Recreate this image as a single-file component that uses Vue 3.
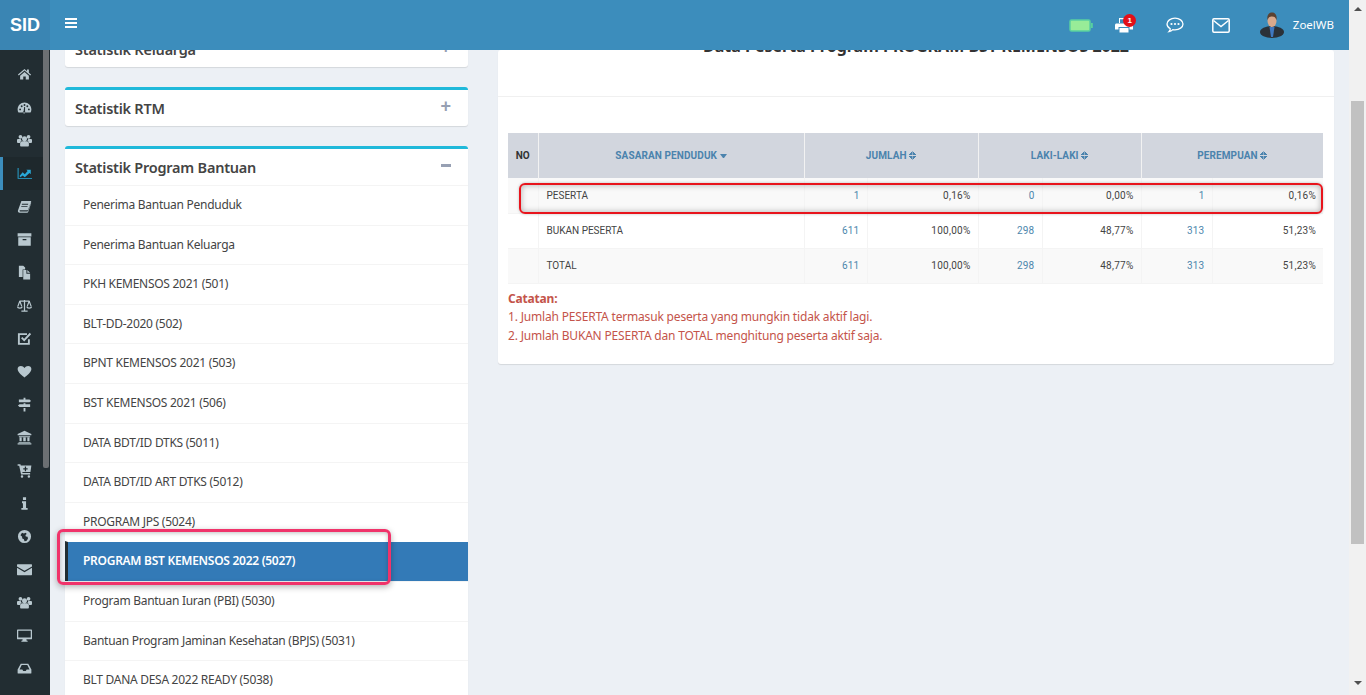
<script setup>
const usersIcon = 'M5.500 3a3 3 0 1 1 0 6 3 3 0 0 1 0-6zm13 0a3 3 0 1 1 0 6 3 3 0 0 1 0-6zM12 5a4 4 0 1 1 0 8 4 4 0 0 1 0-8zM0 11c0-1 1-1.500 2-1.500h4c.2 1 .7 2.200 1.500 3C6 13.200 4.800 14.500 4.700 16H1.500C.6 16 0 15.500 0 14.500zm24 0c0-1-1-1.500-2-1.500h-4c-.2 1-.7 2.200-1.500 3 1.500.7 2.700 2 2.800 3.500h3.200c.9 0 1.500-.5 1.500-1.500zM8.500 13h7c2 0 3.500 1.500 3.500 3.500V20c0 1-.8 1.500-1.500 1.500h-11C5.800 21.500 5 21 5 20v-3.500C5 14.500 6.500 13 8.500 13z'
const sideIcons = [
  { d: 'M12 3 1.500 12l1.300 1.500L12 5.600l9.200 7.900 1.300-1.500-3.500-3V4h-3v2.900zM5 13.800 12 8l7 5.800V20h-5v-5h-4v5H5z' },
  { d: 'M12 4C5.900 4 1 8.900 1 15c0 1.900.5 3.700 1.400 5h19.200c.9-1.300 1.400-3.100 1.400-5 0-6.100-4.900-11-11-11zM5 16.500a1.500 1.500 0 1 1 0-3 1.500 1.500 0 0 1 0 3zm2.500-5a1.500 1.500 0 1 1 0-3 1.500 1.500 0 0 1 0 3zm4.500-2a1.500 1.500 0 1 1 0-3 1.500 1.500 0 0 1 0 3zm.9 8.900a2 2 0 1 1-2.300-.6L11.500 11h1.400zM16.500 11.500a1.500 1.500 0 1 1 0-3 1.500 1.500 0 0 1 0 3zm2.500 5a1.500 1.500 0 1 1 0-3 1.500 1.500 0 0 1 0 3z' },
  { d: usersIcon },
  { d: 'M1 3h1.500v16H24v1.500H1zM4 16l5-6 3.500 3L17 8l-2-2h7v7l-2-2-7.500 7L9 15l-3.500 3z', active: true },
  { d: 'M7 3h15c.6 0 .9.5.7 1L18 18.500c-.3.900-1 1.500-2 1.500H5c-.7 0-1.100-.8-.8-1.500.2-.5.800-.5 1.300-.5h11c.7 0 1.100-.4 1.300-1L22 5.500l.8.500-4.600 14c-.4 1.300-1.300 2-2.500 2H4c-1.800 0-3-1.500-2.500-3.500zM8 7.500l-.4 1.500h10l.4-1.500zm-1 3.500-.4 1.500h10l.4-1.500z' },
  { d: 'M1 2h22v5H1zM2 8.500h20V22H2zM9 11v2h6v-2z' },
  { d: 'M3 1h7l3 3v3H9v12H3zM10 8h5v6h6v9H10zM16.500 8 21 12.500h-4.500z' },
  { s: 'M12 3v18M7 21h10M4 5h16M4.500 5 1.500 13M4.500 5l3 8M19.500 5l-3 8M19.500 5l3 8M1 13.500a3.500 2.500 0 0 0 7 0M16 13.500a3.500 2.500 0 0 0 7 0', w: 2 },
  { s: 'M19 13v7.500H3V5h13M7.500 10.500l4 4L21.500 4', w: 3 },
  { d: 'M12 21.500C9 19 1 13.500 1 8c0-3 2.200-5 5.200-5 2.500 0 4.500 1.400 5.800 3.500C13.300 4.400 15.300 3 17.800 3 20.800 3 23 5 23 8c0 5.500-8 11-11 13.500z' },
  { d: 'M10.500 1h3v3H20l2.500 2.300L20 8.500H3V4h7.500zM10.500 10h3v1.500H21V16H4l-2.500-2.300L4 11.500h6.500zM10.500 17.500h3V23h-3z' },
  { d: 'M12 1 23 6.500v2H1v-2zM3 10h18v1.500H3zM4 12h3.500v6H4zM10 12h4v6h-4zM16.500 12H20v6h-3.500zM2.500 19h19v1.500h-19zM1 21h22v2H1z' },
  { d: 'M1 2h4.500l.5 2H23l-1.500 10.500H8.500l.3 1.500H21v2.500H6.500L3.500 4.500H1zM8 19.500a2 2 0 1 1 0 4 2 2 0 0 1 0-4zm11 0a2 2 0 1 1 0 4 2 2 0 0 1 0-4zM12.500 5.500V8.500H10v2h2.500v2.500h2v-2.500H17v-2h-2.500V5.500z' },
  { d: 'M9.500 2h5v4.500h-5zM8 8.500h6.500V19H17v3H7v-3h2.500v-7.500H8z' },
  { d: 'M12 1.500a10.500 10.500 0 1 0 0 21 10.500 10.500 0 0 0 0-21zM8 6l3 1 3-1 1.500 2-2 1.500.5 2.500 3 .5.500 3L15 19l-3 .5-1-3-2.500-1.500L8 12l-2.500-2z' },
  { d: 'M1 3.500h22c.6 0 1 .4 1 1V7l-12 7L0 7V4.500c0-.6.4-1 1-1zM0 9.200l12 7 12-7V20c0 .6-.4 1-1 1H1c-.6 0-1-.4-1-1z' },
  { d: usersIcon },
  { d: 'M1 2.500h22c.6 0 1 .4 1 1v13.500c0 .6-.4 1-1 1h-8l.5 2.500H17V22H7v-1.500h1.500L9 18H1c-.6 0-1-.4-1-1V3.500c0-.6.4-1 1-1zm1 2v10.500h20V4.500z' },
  { d: 'M6 4.500h12l5 9V19c0 .6-.4 1-1 1H2c-.6 0-1-.4-1-1v-5.500zm1.500 2L4 13.500h4.500l1.500 2.500h4l1.500-2.500H20l-3.500-7z' }
]

const items = [
  'Penerima Bantuan Penduduk',
  'Penerima Bantuan Keluarga',
  'PKH KEMENSOS 2021 (501)',
  'BLT-DD-2020 (502)',
  'BPNT KEMENSOS 2021 (503)',
  'BST KEMENSOS 2021 (506)',
  'DATA BDT/ID DTKS (5011)',
  'DATA BDT/ID ART DTKS (5012)',
  'PROGRAM JPS (5024)',
  'PROGRAM BST KEMENSOS 2022 (5027)',
  'Program Bantuan Iuran (PBI) (5030)',
  'Bantuan Program Jaminan Kesehatan (BPJS) (5031)',
  'BLT DANA DESA 2022 READY (5038)'
]
const activeItem = 'PROGRAM BST KEMENSOS 2022 (5027)'

const rows = [
  { label: 'PESERTA', v: ['1', '0,16%', '0', '0,00%', '1', '0,16%'] },
  { label: 'BUKAN PESERTA', v: ['611', '100,00%', '298', '48,77%', '313', '51,23%'] },
  { label: 'TOTAL', v: ['611', '100,00%', '298', '48,77%', '313', '51,23%'] }
]
const colWidths = [30, 266, 63, 111, 64, 99, 71, 111]
</script>

<template>
  <div class="page">
    <div class="viewport">
      <header class="topbar">
        <div class="logo">SID</div>
        <svg class="burger" viewBox="0 0 12 10"><path d="M0 0h12v2H0zM0 4h12v2H0zM0 8h12v2H0z" fill="#fff" /></svg>
        <div class="top-right">
          <svg class="ti-battery" viewBox="0 0 24 13">
            <rect x="1" y="1" width="20" height="11" rx="1.500" fill="#98ec98" stroke="#58d0a0" stroke-width="1.500" />
            <rect x="22" y="4" width="1.800" height="5" fill="#58d0a0" />
          </svg>
          <div class="printer">
            <svg viewBox="0 0 18 16" class="ti-printer">
              <path d="M4 1h8l2 2v4H4zM5 2.200V6h8V3.500L11.500 2.200zM1.500 6.500h15c.8 0 1.500.7 1.500 1.500v4.500h-3.500V10h-11v2.500H0V8c0-.8.700-1.500 1.500-1.500zM4.500 11h9v4.500h-9z" fill="#fff" fill-rule="evenodd" />
            </svg>
            <span class="badge">1</span>
          </div>
          <svg class="ti-comment" viewBox="0 0 18 16">
            <path d="M9 1.200c4.300 0 8 2.500 8 5.800s-3.700 5.800-8 5.800c-.8 0-1.500-.1-2.200-.2-1 1-2.300 1.700-3.800 2 .7-.8 1.200-1.800 1.300-2.800C2.400 10.700 1 9 1 7c0-3.300 3.700-5.800 8-5.800z" fill="none" stroke="#fff" stroke-width="1.300" />
            <circle cx="5.500" cy="7" r="1.100" fill="#fff" /><circle cx="9" cy="7" r="1.100" fill="#fff" /><circle cx="12.500" cy="7" r="1.100" fill="#fff" />
          </svg>
          <svg class="ti-mail" viewBox="0 0 18 15">
            <rect x=".8" y=".8" width="16.400" height="13.400" rx="1.200" fill="none" stroke="#fff" stroke-width="1.500" />
            <path d="M1.500 2.500 9 8.500l7.500-6" fill="none" stroke="#fff" stroke-width="1.500" />
          </svg>
          <svg class="avatar" viewBox="0 0 24 26">
            <ellipse cx="12" cy="20" rx="12" ry="6" fill="#2b3138" />
            <path d="M9.500 15h5l-1.500 10h-2z" fill="#3f78c0" />
            <ellipse cx="12" cy="9" rx="4.500" ry="6" fill="#d9a98c" />
            <path d="M7.500 8c-.8-5 1.500-7.500 4.500-7.500S17.300 3 16.500 8c-1-2.500-1.700-3.500-4.500-3.500S8.500 5.500 7.500 8z" fill="#5b4231" />
          </svg>
          <span class="user">ZoelWB</span>
        </div>
      </header>

      <div class="shell">
        <aside class="sidebar">
          <nav class="side-nav">
            <div v-for="(ic, i) in sideIcons" :key="i" class="side-item" :class="{ active: ic.active }">
              <svg viewBox="0 0 24 24" class="side-icon">
                <path v-if="ic.d" :d="ic.d" fill="currentColor" fill-rule="evenodd" />
                <path v-if="ic.s" :d="ic.s" fill="none" stroke="currentColor" :stroke-width="ic.w || 1.800" />
              </svg>
            </div>
          </nav>
          <div class="side-scroll"></div>
        </aside>

        <main class="content">
          <section class="left">
            <div class="box box-clipped">
              <div class="box-head">
                <h3>Statistik Keluarga</h3>
                <span class="tool">+</span>
              </div>
            </div>
            <div class="box accent">
              <div class="box-head">
                <h3>Statistik RTM</h3>
                <span class="tool">+</span>
              </div>
            </div>
            <div class="box accent">
              <div class="box-head">
                <h3>Statistik Program Bantuan</h3>
                <span class="tool minus"></span>
              </div>
              <ul class="list">
                <li v-for="it in items" :key="it" :class="{ on: it === activeItem }">{{ it }}</li>
              </ul>
              <div class="mark-pink"></div>
            </div>
          </section>

          <section class="right">
            <div class="panel">
              <div class="panel-head">
                <h2>Data Peserta Program PROGRAM BST KEMENSOS 2022</h2>
              </div>
              <div class="panel-body">
                <div class="table-wrap">
                  <table>
                    <colgroup>
                      <col v-for="(w, i) in colWidths" :key="i" :style="{ width: w + 'px' }" />
                    </colgroup>
                    <thead>
                      <tr>
                        <th class="no">NO</th>
                        <th>SASARAN PENDUDUK <span class="caret-down"></span></th>
                        <th colspan="2">JUMLAH <span class="sort"></span></th>
                        <th colspan="2">LAKI-LAKI <span class="sort"></span></th>
                        <th colspan="2">PEREMPUAN <span class="sort"></span></th>
                      </tr>
                    </thead>
                    <tbody>
                      <tr v-for="(r, i) in rows" :key="r.label" :class="{ odd: i !== 1 }">
                        <td></td>
                        <td class="lbl">{{ r.label }}</td>
                        <td v-for="(v, j) in r.v" :key="j" class="num" :class="{ link: j % 2 === 0 }">{{ v }}</td>
                      </tr>
                    </tbody>
                  </table>
                  <div class="mark-red"></div>
                </div>
                <div class="notes">
                  <strong>Catatan:</strong>
                  <div>1. Jumlah PESERTA termasuk peserta yang mungkin tidak aktif lagi.</div>
                  <div>2. Jumlah BUKAN PESERTA dan TOTAL menghitung peserta aktif saja.</div>
                </div>
              </div>
            </div>
          </section>
        </main>
      </div>
    </div>

    <div class="scrollbar">
      <span class="arrow-up"></span>
      <div class="thumb"></div>
      <span class="arrow-down"></span>
    </div>
  </div>
</template>

<style scoped>
.page {
  display: flex;
  width: 1366px;
  height: 695px;
  overflow: hidden;
  font-family: "Noto Sans", "Liberation Sans", sans-serif;
  background: #ecf0f5;
}
.viewport {
  width: 1349px;
  display: flex;
  flex-direction: column;
}
.topbar {
  height: 50px;
  flex: none;
  display: flex;
  align-items: center;
  background: #3c8dbc;
  position: relative;
  z-index: 2;
}
.logo {
  width: 50px;
  height: 50px;
  background: #3a85b3;
  color: #fff;
  font: 700 18px/50px "Liberation Sans", sans-serif;
  text-align: center;
}
.burger {
  width: 12px;
  height: 10px;
  margin: -4px 0 0 15px;
}
.top-right {
  margin-left: auto;
  display: flex;
  align-items: center;
  padding-right: 15px;
}
.ti-battery { width: 24px; height: 13px; margin-right: 22px; }
.printer { position: relative; width: 18px; height: 16px; margin-right: 33px; }
.ti-printer { width: 18px; height: 16px; display: block; }
.badge {
  position: absolute;
  left: 8.500px;
  top: -3px;
  width: 13px;
  height: 13px;
  border-radius: 50%;
  background: #e30f17;
  color: #fff;
  font: 700 8px/13px "Liberation Sans", sans-serif;
  text-align: center;
}
.ti-comment { width: 18px; height: 16px; margin-right: 28px; }
.ti-mail { width: 18px; height: 15px; margin-right: 30px; }
.avatar { width: 24px; height: 26px; margin-right: 9px; }
.user { color: #fff; font-size: 11.500px; margin-top: -1px; }

.shell {
  flex: 1;
  min-height: 0;
  display: flex;
  overflow: hidden;
}
.sidebar {
  width: 50px;
  flex: none;
  background: #222d32;
  display: flex;
  position: relative;
  overflow: hidden;
}
.side-nav {
  width: 43px;
  padding-top: 8px;
  flex: none;
}
.side-item {
  height: 33px;
  display: flex;
  align-items: center;
  justify-content: center;
  padding-left: 5px;
  box-sizing: border-box;
  color: #b8c7ce;
}
.side-item.active {
  background: #1e282c;
  border-left: 3px solid #3c8dbc;
  padding-left: 2px;
  color: #29a9d8;
}
.side-icon { width: 15px; height: 15px; }
.side-scroll {
  width: 6px;
  height: 418px;
  background: #6c7073;
  border-radius: 0 0 2px 2px;
}
.content {
  flex: 1;
  display: flex;
  gap: 30px;
  padding: 0 15px;
  min-width: 0;
}
.left {
  width: 403px;
  flex: none;
}
.right {
  flex: 1;
  min-width: 0;
}
.box {
  background: #fff;
  border-radius: 3px;
  box-shadow: 0 1px 1px rgba(0, 0, 0, .1);
  position: relative;
}
.box-clipped {
  margin-top: -21px;
  margin-bottom: 20px;
  height: 38px;
}
.accent {
  border-top: 3px solid #20b9da;
  margin-bottom: 20px;
}
.box-head {
  height: 36px;
  padding: 0 17px 0 10px;
  display: flex;
  align-items: center;
  justify-content: space-between;
}
.box-clipped .box-head { height: 38px; padding-top: 1px; box-sizing: border-box; }
.box-head h3 {
  margin: 0;
  font-size: 14.500px;
  font-weight: 600;
  letter-spacing: -.24px;
  color: #444;
}
.tool {
  font: 700 18px/18px "Liberation Sans", sans-serif;
  color: #97a0b3;
  margin-top: -4px;
}
.minus {
  display: block;
  width: 10px;
  height: 3px;
  background: #97a0b3;
}
.list {
  list-style: none;
  margin: 0;
  padding: 0;
}
.list li {
  height: 39.600px;
  box-sizing: border-box;
  border-top: 1px solid #f4f4f4;
  padding-left: 18px;
  font-size: 12px;
  letter-spacing: -.28px;
  line-height: 37px;
  color: #444;
  white-space: nowrap;
}
.list li.on {
  background: #337ab7;
  color: #fff;
  font-weight: 600;
  border-top: 1px solid #fff;
  border-left: 3px solid #222d32;
  padding-left: 15px;
}
.mark-pink {
  position: absolute;
  left: -8px;
  top: 380px;
  width: 334px;
  height: 56px;
  box-sizing: border-box;
  border: 3px solid #f0336a;
  border-radius: 6px;
  box-shadow: 0 2px 6px rgba(0, 0, 0, .3), inset 0 1px 4px rgba(0, 0, 0, .25);
}
.panel {
  background: #fff;
  border-radius: 3px;
  box-shadow: 0 1px 1px rgba(0, 0, 0, .1);
  height: 314px;
}
.panel-head {
  height: 46px;
  border-bottom: 1px solid #f0f0f0;
  overflow: hidden;
}
.panel-head h2 {
  margin: -15px 0 0;
  font-size: 16px;
  font-weight: 700;
  line-height: 22px;
  text-align: center;
  color: #333;
}
.panel-body {
  padding: 36px 10px 0;
}
.table-wrap {
  position: relative;
}
table {
  border-collapse: collapse;
  table-layout: fixed;
  width: 815px;
  font-family: Roboto, "Liberation Sans", sans-serif;
  font-size: 10px;
}
th {
  height: 45px;
  padding: 0;
  background: #d2d6de;
  border-left: 1px solid #f2f2f2;
  color: #4b83ad;
  font-weight: 700;
  letter-spacing: .1px;
  text-align: center;
}
th:first-child { border-left: 0; }
th.no { color: #333; }
td {
  height: 35px;
  padding: 0 7px;
  border-left: 1px solid #f4f4f4;
  border-bottom: 1px solid #f4f4f4;
  color: #444;
  box-sizing: border-box;
  white-space: nowrap;
}
td:first-child { border-left: 0; }
td.lbl { padding-left: 8px; }
tr.odd td { background: #f9f9f9; }
td.num { text-align: right; letter-spacing: .25px; }
td.link { color: #4d87ad; }
.caret-down, .sort {
  display: inline-block;
  width: 7px;
  position: relative;
}
.caret-down {
  height: 0;
  border-left: 3.500px solid transparent;
  border-right: 3.500px solid transparent;
  border-top: 4px solid #4b83ad;
  box-sizing: border-box;
  vertical-align: middle;
}
.sort {
  height: 9px;
  vertical-align: -1px;
  background:
    linear-gradient(to bottom right, transparent 50%, #4b83ad 50%) left top / 50% 4px no-repeat,
    linear-gradient(to bottom left, transparent 50%, #4b83ad 50%) right top / 50% 4px no-repeat,
    linear-gradient(to top right, transparent 50%, #4b83ad 50%) left bottom / 50% 4px no-repeat,
    linear-gradient(to top left, transparent 50%, #4b83ad 50%) right bottom / 50% 4px no-repeat;
}
.mark-red {
  position: absolute;
  left: 11px;
  top: 50px;
  width: 804px;
  height: 31px;
  box-sizing: border-box;
  border: 2px solid #e8141c;
  border-radius: 6px;
  box-shadow: inset 0 0 6px rgba(0, 0, 0, .3), 0 0 3px rgba(0, 0, 0, .25);
}
.notes {
  margin-top: 6px;
  color: #c4544a;
  font-size: 12px;
  letter-spacing: -.18px;
  line-height: 18.500px;
}
.notes strong { font-weight: 700; display: block; }

.scrollbar {
  width: 17px;
  flex: none;
  background: #f1f1f1;
  position: relative;
  display: flex;
  flex-direction: column;
  align-items: center;
}
.arrow-up {
  margin-top: 7px;
  border-left: 4px solid transparent;
  border-right: 4px solid transparent;
  border-bottom: 4px solid #505050;
}
.thumb {
  width: 13px;
  height: 443px;
  margin-top: 90px;
  background: #c1c1c1;
}
.arrow-down {
  margin-top: 137px;
  border-left: 4px solid transparent;
  border-right: 4px solid transparent;
  border-top: 4px solid #505050;
}
</style>

<style>
html, body { margin: 0; overflow: hidden; }
</style>
